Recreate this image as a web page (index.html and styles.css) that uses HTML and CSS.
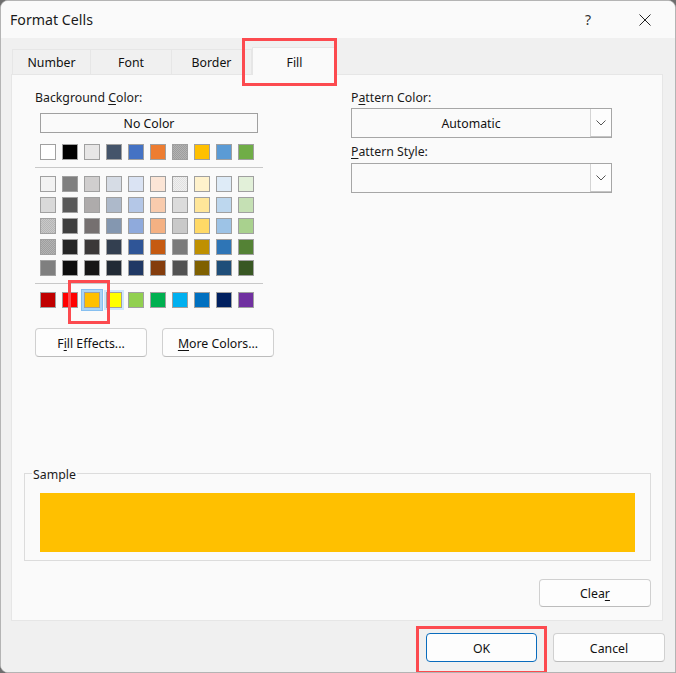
FILE: index.html
```html
<!DOCTYPE html>
<html lang="en">
<head>
<meta charset="utf-8">
<title>Format Cells</title>
<link rel="stylesheet" href="styles.css">
</head>
<body>
<div class="window">
  <header class="titlebar">
    <span class="title">Format Cells</span>
    <span class="help">?</span>
    <svg class="close" width="12" height="12" viewBox="0 0 12 12"><path d="M0.5 0.5L11.5 11.5M11.5 0.5L0.5 11.5" stroke="#222" stroke-width="1" fill="none"/></svg>
  </header>
  <div class="body">
    <nav class="tabs">
      <div class="tab t1">Number</div>
      <div class="tab t2">Font</div>
      <div class="tab t3">Border</div>
      <div class="tab active">Fill</div>
    </nav>
    <main class="panel">
      <div class="top">
        <section class="left">
          <div class="label">Background <u>C</u>olor:</div>
          <div class="nocolor">No Color</div>
          <div class="swatches first">
            <i style="background:#ffffff"></i><i style="background:#000000"></i><i style="background:#e7e6e6"></i><i style="background:#44546a"></i><i style="background:#4472c4"></i><i style="background:#ed7d31"></i><i class="dith" style="background-color:#a5a5a5"></i><i style="background:#ffc000"></i><i style="background:#5b9bd5"></i><i style="background:#70ad47"></i>
          </div>
          <div class="divider"></div>
          <div class="swatches grid">
            <i style="background:#f2f2f2"></i><i style="background:#7f7f7f"></i><i style="background:#d0cece"></i><i style="background:#d6dce5"></i><i style="background:#dae3f3"></i><i style="background:#fbe5d6"></i><i class="dith" style="background-color:#ededed"></i><i style="background:#fff2cc"></i><i style="background:#deebf7"></i><i style="background:#e2f0d9"></i>
            <i style="background:#d9d9d9"></i><i style="background:#595959"></i><i style="background:#aeabab"></i><i style="background:#adb9ca"></i><i style="background:#b4c7e7"></i><i style="background:#f8cbad"></i><i style="background:#dbdbdb"></i><i style="background:#ffe699"></i><i style="background:#bdd7ee"></i><i style="background:#c5e0b4"></i>
            <i class="dith" style="background-color:#bfbfbf"></i><i style="background:#3f3f3f"></i><i style="background:#757070"></i><i style="background:#8497b0"></i><i style="background:#8faadc"></i><i style="background:#f4b183"></i><i style="background:#c9c9c9"></i><i style="background:#ffd966"></i><i style="background:#9dc3e6"></i><i style="background:#a9d18e"></i>
            <i class="dith" style="background-color:#a6a6a6"></i><i style="background:#262626"></i><i style="background:#3b3838"></i><i style="background:#333f50"></i><i style="background:#2f5597"></i><i style="background:#c55a11"></i><i style="background:#7b7b7b"></i><i style="background:#bf9000"></i><i style="background:#2e75b6"></i><i style="background:#548235"></i>
            <i style="background:#7f7f7f"></i><i style="background:#0d0d0d"></i><i style="background:#171616"></i><i style="background:#222a35"></i><i style="background:#203864"></i><i style="background:#843c0c"></i><i style="background:#525252"></i><i style="background:#7f6000"></i><i style="background:#1f4e79"></i><i style="background:#385723"></i>
          </div>
          <div class="divider"></div>
          <div class="swatches standard">
            <i style="background:#c00000"></i><i style="background:#ff0000"></i><i class="selected" style="background:#ffc000"></i><i class="hover" style="background:#ffff00"></i><i style="background:#92d050"></i><i style="background:#00b050"></i><i style="background:#00b0f0"></i><i style="background:#0070c0"></i><i style="background:#002060"></i><i style="background:#7030a0"></i>
          </div>
          <div class="left-buttons">
            <div class="btn">F<u>i</u>ll Effects...</div>
            <div class="btn"><u>M</u>ore Colors...</div>
          </div>
        </section>
        <section class="right">
          <div class="label">P<u>a</u>ttern Color:</div>
          <div class="select">
            <span class="select-value">Automatic</span>
            <span class="arrow"><svg width="10" height="6" viewBox="0 0 10 6"><path d="M0.5 0.5L5 5L9.5 0.5" stroke="#555" fill="none"/></svg></span>
          </div>
          <div class="label second"><u>P</u>attern Style:</div>
          <div class="select">
            <span class="select-value"></span>
            <span class="arrow"><svg width="10" height="6" viewBox="0 0 10 6"><path d="M0.5 0.5L5 5L9.5 0.5" stroke="#555" fill="none"/></svg></span>
          </div>
        </section>
      </div>
      <fieldset class="sample">
        <legend>Sample</legend>
        <div class="sample-fill"></div>
      </fieldset>
      <div class="clear-row"><div class="btn">Clea<u>r</u></div></div>
    </main>
    <footer class="footer">
      <div class="btn default">OK</div>
      <div class="btn">Cancel</div>
    </footer>
  </div>
  <div class="mark mark-tab"></div>
  <div class="mark mark-swatch"></div>
  <div class="mark mark-ok"></div>
</div>
</body>
</html>
```

FILE: styles.css
```css
* { box-sizing: border-box; }
html, body { margin: 0; padding: 0; background: #6e6e6e; }
body { width: 676px; height: 673px; overflow: hidden; font-family: "Noto Sans", "Open Sans", sans-serif; font-size: 12.3px; color: #111; }
u { text-underline-offset: 2px; text-decoration-thickness: 1px; }
.window { position: relative; width: 676px; height: 673px; border: 1px solid #b4b4b4; border-radius: 8px 8px 0 8px; background: #fafafa; display: flex; flex-direction: column; overflow: hidden; }
.titlebar { height: 37px; flex: none; display: flex; align-items: center; padding: 0 0 0 9px; background: #fafafa; }
.title { font-size: 14.2px; flex: 1; color: #1a1a1a; }
.help { font-size: 14px; color: #333; margin-right: 48px; }
.close { margin-right: 24px; }
.body { flex: 1; display: flex; flex-direction: column; background: #f0f0f0; min-height: 0; }
.tabs { display: flex; align-items: flex-end; height: 37px; padding-left: 11px; margin-bottom: -1px; position: relative; z-index: 1; }
.tab { height: 26px; padding-top: 1px; display: flex; align-items: center; justify-content: center; background: #f0f0f0; border: 1px solid #e6e6e6; border-left: 0; border-bottom-color: #e6e6e6; }
.t1 { width: 79px; border-left: 1px solid #e6e6e6; }
.t2 { width: 81px; }
.t3 { width: 80px; }
.active { width: 85px; height: 28px; padding-top: 1px; background: #fafafa; border: 1px solid #e6e6e6; border-bottom: 0; }
.panel { flex: 1; margin: 0 12px 0 10px; background: #fafafa; border: 1px solid #e6e6e6; display: flex; flex-direction: column; min-height: 0; }
.top { display: flex; padding: 13px 0 0 23px; flex: 1; }
.left { width: 228px; }
.right { width: 261px; margin-left: 88px; }
.label { height: 17px; line-height: 19px; color: #1a1a1a; }
.nocolor { margin: 8px 5px 0; width: 218px; height: 20px; padding-top: 1px; border: 1px solid #a0a0a0; background: #fafafa; display: flex; align-items: center; justify-content: center; }
.swatches { display: grid; grid-template-columns: repeat(10, 16px); column-gap: 6px; padding-left: 5px; }
.swatches i { display: block; width: 16px; height: 16px; border: 1px solid #a0a0a0; }
.dith { background-image: repeating-conic-gradient(rgba(255,255,255,.16) 0 25%, rgba(0,0,0,.05) 0 50%); background-size: 2px 2px; }
.first { margin-top: 11px; }
.divider { height: 1px; background: #c8c8c8; }
.first + .divider { margin-top: 7px; }
.grid { margin-top: 8px; row-gap: 5px; }
.grid + .divider { margin-top: 7px; }
.standard { margin-top: 8px; }
.swatches .selected { box-shadow: 0 0 0 2px #a9d4f7, 0 0 0 3px #86bff0; }
.swatches .hover { box-shadow: 0 0 0 2px #cfe7fb; }
.left-buttons { display: flex; gap: 15px; margin-top: 20px; }
.btn { flex: none; width: 112px; height: 29px; padding-top: 1px; display: flex; align-items: center; justify-content: center; background: #fdfdfd; border: 1px solid #d0d0d0; border-bottom-color: #bcbcbc; border-radius: 4px; color: #111; }
.select { margin-top: 3px; height: 30px; width: 261px; border: 1px solid #a6a6a6; display: flex; background: #fafafa; }
.select-value { flex: 1; display: flex; align-items: center; justify-content: center; }
.arrow { width: 21px; display: flex; align-items: center; justify-content: center; background: #fdfdfd; border-left: 1px solid #d4d4d4; border-bottom: 1px solid #c4c4c4; }
.label.second { margin-top: 4px; }
.label.second + .select { margin-top: 4px; }
.sample { margin: 0 11px 0 12px; padding: 0 15px 8px; height: 88px; border: 1px solid #dcdcdc; position: relative; min-width: 0; }
.sample legend { padding: 0 1px; margin-left: 7px; height: 17px; line-height: 17px; position: absolute; top: -8px; left: 0; background: #fafafa; color: #1a1a1a; }
.sample-fill { height: 59px; width: 595px; margin-top: 19px; background: #ffc000; }
.clear-row { display: flex; justify-content: flex-end; padding-right: 11px; margin: 18px 0 13px; }
.clear-row .btn { height: 28px; }
.footer { flex: none; display: flex; justify-content: flex-end; gap: 16px; padding: 12px 10px 10px 0; height: 51px; }
.default { width: 111px; border: 1px solid #0a6cbd; }
.mark { position: absolute; border: 3px solid #fc4a4f; z-index: 5; pointer-events: none; }
.mark-tab { left: 241px; top: 37px; width: 95px; height: 48px; }
.mark-swatch { left: 67px; top: 279px; width: 42px; height: 44px; }
.mark-ok { left: 415px; top: 625px; width: 131px; height: 48px; }
```
